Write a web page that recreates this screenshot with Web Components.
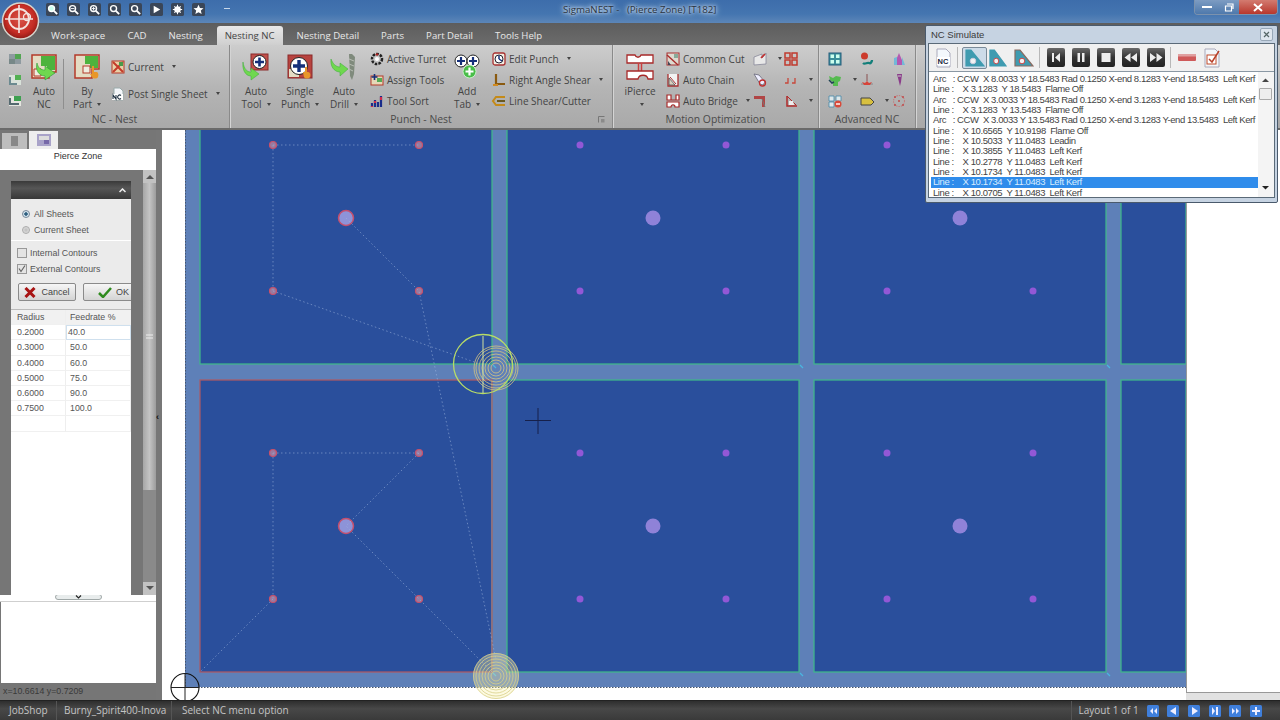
<!DOCTYPE html>
<html><head><meta charset="utf-8"><title>SigmaNEST</title>
<style>
html,body{margin:0;padding:0;width:1280px;height:720px;overflow:hidden;background:#fff}
body{font-family:"Open Sans","Liberation Sans",sans-serif;display:flex;flex-direction:column;position:relative}
</style></head><body>
<sn-titlebar title-text="SigmaNEST -   (Pierce Zone) [T182]"></sn-titlebar>
<sn-tabs>
<sn-tab style="letter-spacing:.2px">Work-space</sn-tab><sn-tab>CAD</sn-tab><sn-tab>Nesting</sn-tab><sn-tab active>Nesting NC</sn-tab><sn-tab>Nesting Detail</sn-tab><sn-tab>Parts</sn-tab><sn-tab>Part Detail</sn-tab><sn-tab>Tools Help</sn-tab>
</sn-tabs>
<sn-ribbon>
 <rb-group label="NC - Nest" style="width:229px">
  <rb-col style="margin-left:8px;width:15px"><rb-small icon="mini1"></rb-small><rb-small icon="mini2"></rb-small><rb-small icon="mini3"></rb-small></rb-col>
  <rb-big icon="autonc" style="width:38px;margin-left:2px">Auto<br>NC</rb-big>
  <rb-sep></rb-sep>
  <rb-big icon="bypart" drop style="width:38px;margin-left:4px">By<br>Part</rb-big>
  <rb-col style="margin-left:5px;padding-top:11px;gap:6px"><rb-small icon="current" drop>Current</rb-small><rb-small icon="post" drop>Post Single Sheet</rb-small></rb-col>
 </rb-group>
 <rb-group label="Punch - Nest" launcher style="width:382px">
  <rb-big icon="autotool" drop style="width:44px;margin-left:4px">Auto<br>Tool</rb-big>
  <rb-big icon="singlepunch" drop style="width:44px">Single<br>Punch</rb-big>
  <rb-big icon="autodrill" drop style="width:44px">Auto<br>Drill</rb-big>
  <rb-col style="margin-left:4px;width:79px"><rb-small icon="turret">Active Turret</rb-small><rb-small icon="assign">Assign Tools</rb-small><rb-small icon="sort">Tool Sort</rb-small></rb-col>
  <rb-big icon="addtab" drop style="width:36px">Add<br>Tab</rb-big>
  <rb-col style="margin-left:7px"><rb-small icon="edit" drop>Edit Punch</rb-small><rb-small icon="shear" drop>Right Angle Shear</rb-small><rb-small icon="cutter">Line Shear/Cutter</rb-small></rb-col>
 </rb-group>
 <rb-group label="Motion Optimization" style="width:205px">
  <rb-big icon="ipierce" drop style="width:44px;margin-left:5px">iPierce<br></rb-big>
  <rb-col style="margin-left:4px;width:83px"><rb-small icon="common">Common Cut</rb-small><rb-small icon="chain">Auto Chain</rb-small><rb-small icon="bridge" drop>Auto Bridge</rb-small></rb-col>
  <rb-grid style="margin-left:4px;grid-template-columns:31px 31px">
   <rb-small icon="m1" drop></rb-small><rb-small icon="m2"></rb-small>
   <rb-small icon="m3"></rb-small><rb-small icon="m4" drop></rb-small>
   <rb-small icon="m5"></rb-small><rb-small icon="m6" drop></rb-small>
  </rb-grid>
 </rb-group>
 <rb-group label="Advanced NC" style="width:96px">
  <rb-grid style="margin-left:9px;grid-template-columns:32px 32px 24px">
   <rb-small icon="a1"></rb-small><rb-small icon="a2"></rb-small><rb-small icon="a3"></rb-small>
   <rb-small icon="a4" drop></rb-small><rb-small icon="a5"></rb-small><rb-small icon="a6"></rb-small>
   <rb-small icon="a7"></rb-small><rb-small icon="a8" drop></rb-small><rb-small icon="a9"></rb-small>
  </rb-grid>
 </rb-group>
</sn-ribbon>
<sn-main>
 <sn-panel></sn-panel>
 <sn-canvas></sn-canvas>
 <sn-side></sn-side>
</sn-main>
<sn-status></sn-status>
<nc-window></nc-window>
<script>
const ICONS={
 mini1:[14,'<rect x="1" y="2" width="12" height="10" fill="#8e9aa0"/><rect x="7" y="2" width="6" height="5" fill="#52a552"/><path d="M1 7h6v5H1z" fill="#788"/>'],
 mini2:[14,'<rect x="1" y="2" width="12" height="10" fill="#d9e2da"/><rect x="7" y="2" width="6" height="5" fill="#52b052"/><path d="M2 4v7h7" fill="none" stroke="#6b8a90" stroke-width="2"/>'],
 mini3:[14,'<rect x="1" y="2" width="12" height="10" fill="#e6e6e0"/><rect x="6" y="2" width="7" height="5" fill="#3ea050"/><path d="M2 4v6h9" fill="none" stroke="#556a70" stroke-width="2"/>'],
 autonc:[26,'<path d="M1 1h24v17h-7v6H1z" fill="#e4dcc4" stroke="#b43a2a" stroke-width="1.5"/><path d="M10 2h14v14H16v-4h-6z" fill="#4db33d"/><path d="M3 15h7v7H3z" fill="#f0ece0" stroke="#b43a2a"/><path d="M6 9C7 14 10 16 14 16V12L24 19 14 26V22C8 22 4 16 6 9z" fill="#6fd84f" stroke="#2e9a3a" stroke-width=".6"/>'],
 bypart:[26,'<path d="M1 1h24v14h-7v9H1z" fill="#e4dcc4" stroke="#b43a2a" stroke-width="1.5"/><path d="M11 2h13v12h-8v-4h-5z" fill="#4db33d"/><rect x="9" y="12" width="7" height="7" fill="#f0ece0" stroke="#b43a2a"/><path d="M20 12v6h2c2 0 3 2 2 5-1 2-5 2-6 0l-2-3 2 0 0-8z" fill="#e8972a"/>'],
 current:[14,'<rect x="1" y="1" width="12" height="12" fill="#e9d0a8" stroke="#b43a2a"/><path d="M2 2l10 10M12 2L2 12" stroke="#c43a2a" stroke-width="2"/><rect x="8" y="2" width="4" height="4" fill="#4a9a4a"/>'],
 post:[14,'<path d="M3 1h6l3 3v9H3z" fill="#f4f6fa" stroke="#9aa"/><rect x="1" y="7" width="11" height="6" fill="#fff"/><path d="M2 12V8l3 4V8M10 8.5a2 2 0 1 0 0 3" fill="none" stroke="#234" stroke-width="1.1"/>'],
 autotool:[26,'<rect x="8" y="0" width="17" height="16" fill="#c2504a" stroke="#8a2a2a" stroke-width="1"/><circle cx="16.5" cy="8" r="6.5" fill="#fff" stroke="#222"/><path d="M16.5 3.5v9M12 8h9" stroke="#15307a" stroke-width="2.6"/><path d="M0 8C1 15 4 18 8 18V14L16 20 8 26V22C2 22-1 15 0 8z" fill="#6fd84f" stroke="#3aa83a" stroke-width=".5"/>'],
 singlepunch:[26,'<rect x="1" y="1" width="24" height="23" fill="#b8433f" stroke="#8a2a2a"/><path d="M2 15h10v8H2z" fill="#e4dcc4"/><circle cx="12" cy="12" r="8.5" fill="#fff" stroke="#222"/><path d="M12 6v12M6 12h12" stroke="#15307a" stroke-width="3.4"/><path d="M20 13v5c3 0 4 2 3 5-1 2-5 2-6 0l-1-5h2v-5z" fill="#e8972a"/>'],
 autodrill:[26,'<path d="M18 0l3 0 3 3-1 17-2 6-2-4z" fill="#7f8a7c"/><path d="M18 5l5 2M18 10l5 2M18 15l4 2" stroke="#b8bdb4"/><path d="M0 5C2 10 5 13 9 13V9L17 15 9 22V18C3 18-1 12 0 5z" fill="#6fd84f" stroke="#3aa83a" stroke-width=".5"/>'],
 turret:[14,'<circle cx="7" cy="7" r="5" fill="none" stroke="#222" stroke-width="2.5" stroke-dasharray="2.5 1.2"/><circle cx="7" cy="7" r="2" fill="#fff"/><path d="M7 1v3M5.5 2.5h3" stroke="#a22" stroke-width="1.1"/>'],
 assign:[14,'<rect x="1" y="3" width="12" height="9" fill="#e6d8b8" stroke="#b43a2a"/><rect x="7" y="5" width="5" height="4" fill="#5a5"/><path d="M4.5 1v6M1.5 4h6" stroke="#15307a" stroke-width="1.6"/>'],
 sort:[14,'<path d="M2 13V9M5 13V6M8 13V8M11 13V2" stroke="#1a2c8a" stroke-width="2.2"/><path d="M5 9V7M11 6V3M2 13v-1" stroke="#d02a4a" stroke-width="2.2"/>'],
 addtab:[26,'<circle cx="7" cy="7" r="6" fill="#fff" stroke="#222"/><path d="M7 3v8M3 7h8" stroke="#15307a" stroke-width="2.2"/><circle cx="19" cy="7" r="6" fill="#fff" stroke="#222"/><path d="M19 3v8M15 7h8" stroke="#15307a" stroke-width="2.2"/><circle cx="15.5" cy="17.5" r="6.5" fill="#48bd48" stroke="#c8eec8"/><path d="M15.5 13.5v8M11.5 17.5h8" stroke="#fff" stroke-width="2.2"/>'],
 edit:[14,'<rect x="1" y="1" width="12" height="12" rx="2" fill="#f1ece0" stroke="#a83030" stroke-width="1.3"/><circle cx="7" cy="7" r="4" fill="#fff" stroke="#223"/><path d="M7 7V3.5M7 7l3 2" stroke="#15307a" stroke-width="1.5"/>'],
 shear:[14,'<path d="M4 1v10h9" fill="none" stroke="#8a5a10" stroke-width="2.2"/><path d="M1 11h5v2H1z" fill="#d08a20"/>'],
 cutter:[14,'<path d="M13 3H4L1 7l3 4h9" fill="none" stroke="#c48a18" stroke-width="2"/><path d="M5 7h8" stroke="#6a5a20" stroke-width="2"/>'],
 ipierce:[26,'<path d="M0 1h8c1 3 5 3 6 0h12v8H0z" fill="#fff" stroke="#a82a2a" stroke-width="1.3"/><path d="M11.5 9v8M14.5 9v8" stroke="#c94040" stroke-width="1.5"/><path d="M0 17h26v8h-5c-1-5-9-5-10 0H0z" fill="#fff" stroke="#a82a2a" stroke-width="1.3"/>'],
 common:[14,'<rect x="1" y="1" width="12" height="12" fill="#dedad0" stroke="#a83030"/><path d="M1 3l11 10" stroke="#a82a2a" stroke-width="1.4"/><path d="M2 9l3 4h-3z" fill="#445"/><rect x="8" y="2" width="4" height="4" fill="#8a9"/>'],
 chain:[14,'<path d="M2 1v12h10V1" fill="#f2f2f2" stroke="#a83030" stroke-width="1.3"/><path d="M4 4l6 7" stroke="#a83030"/><path d="M3 5l6 7H3z" fill="#d8d0c0" stroke="#444" stroke-width=".7"/>'],
 bridge:[14,'<path d="M1 1h4v5h5V1h3v5H1zM1 8h12v5H9c0-3-4-3-4 0H1z" fill="#fff" stroke="#a82a2a" stroke-width="1.2"/>'],
 m1:[14,'<path d="M1 13V5l8-3 0 4 4-5v11z" fill="#e8e8e8" stroke="#889" stroke-width=".8"/><path d="M8 6l4-4" stroke="#c03030" stroke-width="1.7"/>'],
 m2:[14,'<rect x="1" y="1" width="5" height="5" fill="none" stroke="#c03a2e" stroke-width="1.5"/><rect x="8" y="1" width="5" height="5" fill="none" stroke="#c03a2e" stroke-width="1.5"/><rect x="1" y="8" width="5" height="5" fill="none" stroke="#c03a2e" stroke-width="1.5"/><rect x="8" y="8" width="5" height="5" fill="none" stroke="#c03a2e" stroke-width="1.5"/>'],
 m3:[14,'<path d="M1 1l5 1 6 7-2 3-3-1z" fill="#eef" stroke="#667" stroke-width=".8"/><circle cx="9.5" cy="10" r="3" fill="none" stroke="#c03030" stroke-width="1.3"/>'],
 m4:[14,'<path d="M2 9h3V4M12 4v5H9" fill="none" stroke="#c8473a" stroke-width="1.3" transform="translate(-1 1)"/>'],
 m5:[14,'<path d="M1 2h11v11h-3V5H1z" fill="#b04545"/><path d="M9 5l3 8" stroke="#777"/>'],
 m6:[14,'<path d="M3 2v10h10" fill="none" stroke="#b02a2a" stroke-width="1.5"/><path d="M3 2l9 9" stroke="#b02a2a"/><path d="M5 7l4 0 1 4H5z" fill="#eee"/>'],
 a1:[14,'<rect x="1" y="1" width="12" height="12" fill="#3a8f9a" stroke="#245c7c"/><rect x="2.5" y="2.5" width="3.5" height="3.5" fill="#cfe"/><rect x="8" y="2.5" width="3.5" height="3.5" fill="#cfe"/><rect x="2.5" y="8" width="3.5" height="3.5" fill="#cfe"/><rect x="8" y="8" width="3.5" height="3.5" fill="#cfe"/>'],
 a2:[14,'<circle cx="4.5" cy="4" r="3.5" fill="#cc3b2c"/><path d="M3 11c2 2 4-1 6 0s3-2 3-3" fill="none" stroke="#137f7a" stroke-width="2.3"/>'],
 a3:[14,'<path d="M7 1l5 12H2z" fill="#b358b0"/><path d="M2 13V6l3-1v8z" fill="#72b8d8"/><path d="M10 13V5l3 8z" fill="#72b8d8"/>'],
 a4:[14,'<path d="M1 3l4 2 3-2 5 1-1 4-2 1v4H5V9L2 7z" fill="#56bb50"/><path d="M1 7l3 3 2-1" stroke="#245" fill="none" stroke-width="1.5"/>'],
 a5:[14,'<path d="M7 1v7" stroke="#8a5050"/><path d="M1 11h12" stroke="#888"/><path d="M7 8l2 2 3-1-2 3H4L2 9l3 1z" fill="#d6443a"/>'],
 a6:[14,'<path d="M5 1h5l-1 8-1 4-1-4z" fill="#8a3c8a"/><path d="M6 3h3" stroke="#ccc"/>'],
 a7:[14,'<path d="M1 2h5v5H1zM8 2h5v5H8zM1 8h5v5H1z" fill="#dfe8ea" stroke="#48a" stroke-width=".8"/><circle cx="10" cy="10" r="3.5" fill="#d84a3a"/><path d="M8 10h4" stroke="#fff" stroke-width="1.4"/>'],
 a8:[14,'<path d="M1 4h9l4 4-3 3H1z" fill="#d8c040" stroke="#444"/>'],
 a9:[14,'<g fill="none" stroke="#c08080" stroke-width="1.1" stroke-dasharray="1.5 1"><circle cx="7" cy="7" r="5.5"/></g><g fill="#c04a4a"><circle cx="3" cy="3" r="1"/><circle cx="11" cy="3" r="1"/><circle cx="3" cy="11" r="1"/><circle cx="11" cy="11" r="1"/><circle cx="7" cy="7" r="1"/></g>']
};
function icon(n,s){const d=ICONS[n];if(!d)return'';return `<svg width="${s}" height="${s}" viewBox="0 0 ${d[0]} ${d[0]}" style="display:block;overflow:visible;flex:none">${d[1]}</svg>`}
function def(name,fn){
  customElements.define(name,class extends HTMLElement{
    constructor(){super();this.attachShadow({mode:'open'});}
    connectedCallback(){this.shadowRoot.innerHTML=fn(this);}
  });
}
const DROP='<i style="display:inline-block;width:0;height:0;border:2.5px solid transparent;border-top:3px solid #444;border-bottom:0;vertical-align:2px;margin-left:5px"></i>';
const RBFONT='font:10px "Open Sans","Liberation Sans",sans-serif;color:#444';

def('sn-titlebar',el=>`<style>:host{display:flex;height:23px;position:relative;background:linear-gradient(#3d6dab,#4475b0 60%,#5c86b8);align-items:flex-start;box-sizing:border-box;flex:none}
.qat{display:flex;gap:7.8px;margin:3px 0 0 46px}.q{width:13px;height:13px}
.dd{margin:8px 0 0 19px;width:6px;height:5px;border-top:1px solid #c8d8ea}
.title{position:absolute;left:563px;top:2px;font:9.7px/16px "Open Sans","Liberation Sans",sans-serif;color:#2a3340;white-space:pre;text-shadow:0 0 5px #cfe0f2,0 0 7px #cfe0f2,0 0 3px #cfe0f2}
.ctl{position:absolute;right:2px;top:0;height:14px;display:flex;border:1px solid #7c92ad;border-top:0;border-radius:0 0 4px 4px;overflow:hidden}
.c{height:14px;width:24px;background:linear-gradient(#7d9cc2,#4e79ac);display:flex;align-items:center;justify-content:center}.c.r{width:20px}.x{width:38px;background:linear-gradient(#d37b70,#b8372c)}
.logo{position:absolute;left:1px;top:0;z-index:5}</style>
<svg class="logo" width="42" height="42" viewBox="0 0 42 42"><defs><radialGradient id="lg" cx=".5" cy=".45" r=".6"><stop offset="0" stop-color="#d8544a"/><stop offset=".65" stop-color="#c42c24"/><stop offset="1" stop-color="#7c1612"/></radialGradient></defs><circle cx="19.5" cy="21" r="18" fill="url(#lg)" stroke="#d8d4cc" stroke-width="1.5"/><circle cx="18" cy="19" r="10" fill="none" stroke="#f4e4e0" stroke-width="1.8"/><path d="M18 5v28M4 19h28" stroke="#f4e4e0" stroke-width="1.6"/><circle cx="26" cy="17" r="3.5" fill="none" stroke="#f4e4e0" stroke-width="1.3"/></svg>
<div class="qat">${[0,1,2,3,4,5,6,7].map(i=>{const g=i==5?'<path d="M4 3l7 4-7 4z" fill="#fff"/>':i==6?'<circle cx="7" cy="7" r="3.5" fill="#fff"/><circle cx="7" cy="7" r="1.2" fill="#3a4658"/><path d="M7 2v10M2 7h10M3.5 3.5l7 7M10.5 3.5l-7 7" stroke="#fff" stroke-width="1.1"/>':i==7?'<path d="M7 1.8l1.6 3.5 3.8.4-2.9 2.5.9 3.7L7 10l-3.4 1.9.9-3.7L1.6 5.7l3.8-.4z" fill="#fff"/>':`<circle cx="6" cy="6" r="3.2" fill="${i==0?'#cfe':'none'}" stroke="#fff" stroke-width="1.5"/><path d="M8.5 8.5l3.5 3.5" stroke="#fff" stroke-width="2"/>${i==2?'<path d="M6 4v4M4 6h4" stroke="#fff"/>':i==1?'<path d="M4 6h4" stroke="#fff"/>':''}`;return `<svg class="q" viewBox="0 0 14 14"><rect width="14" height="14" rx="2" fill="#3a4658"/>${g}</svg>`}).join('')}</div>
<div class="dd"></div>
<div class="title">${el.getAttribute('title-text')}</div>
<div class="ctl"><div class="c"><svg width="10" height="4"><rect y="1" width="10" height="2" fill="#fff"/></svg></div><div class="c r"><svg width="10" height="9"><path d="M1.5 3h6v5h-6zM3 1h6v5" fill="none" stroke="#fff" stroke-width="1.2"/></svg></div><div class="c x"><svg width="10" height="9"><path d="M1 1l8 7M9 1L1 8" stroke="#fff" stroke-width="2"/></svg></div></div>`);

def('sn-tabs',()=>`<style>:host{display:flex;height:22px;flex:none;background:linear-gradient(#5d5d5d,#6c6c6c);padding-left:40px;box-sizing:border-box;align-items:flex-end}</style><slot></slot>`);
def('sn-tab',el=>{const a=el.hasAttribute('active');return `<style>:host{display:block;height:19px;padding:0 ${a?8:11}px;${a?'margin:0 3px;':''}font:9.6px/20px "Open Sans","Liberation Sans",sans-serif;color:${a?'#444':'#e8e8e8'};${a?'background:linear-gradient(#e8e8e8,#cfcfcf);border-radius:3px 3px 0 0;':''}white-space:nowrap}</style><slot></slot>`});

def('sn-ribbon',()=>`<style>:host{display:flex;height:85px;flex:none;background:linear-gradient(#cdcdcd,#b5b5b5 50%,#a9a9a9);box-sizing:border-box;border-bottom:2px solid #6a6a6a;width:1280px}</style><slot></slot>`);
def('rb-group',el=>`<style>:host{display:flex;flex-direction:column;border-right:1px solid #8a8a8a;box-shadow:1px 0 0 #d4d4d4;position:relative;flex:none}
.c{display:flex;height:67px;align-items:flex-start}.l{height:16px;line-height:16px;text-align:center;${RBFONT};font-size:10.4px;color:#4a4a4a}
.lz{position:absolute;right:7px;bottom:5px;width:7px;height:7px}</style>
<div class="c"><slot></slot></div><div class="l">${el.getAttribute('label')}</div>${el.hasAttribute('launcher')?'<svg class="lz" viewBox="0 0 7 7"><path d="M.5 6.5v-6h6" fill="none" stroke="#777"/><rect x="3" y="3" width="3.5" height="3.5" fill="#8a8a8a"/></svg>':''}`);
def('rb-col',()=>`<style>:host{display:flex;flex-direction:column;padding-top:3px;flex:none}</style><slot></slot>`);
def('rb-grid',()=>`<style>:host{display:grid;padding-top:3px;flex:none}</style><slot></slot>`);
def('rb-sep',()=>`<style>:host{display:block;width:1px;height:50px;margin-top:14px;background:#8e8e8e;flex:none}</style>`);
def('rb-big',el=>`<style>:host{display:flex;flex-direction:column;align-items:center;padding-top:9px;text-align:center;${RBFONT};line-height:13px;flex:none}.i{height:31px}</style><div class="i">${icon(el.getAttribute('icon'),26)}</div><div><slot></slot>${el.hasAttribute('drop')?DROP:''}</div>`);
def('rb-small',el=>`<style>:host{display:flex;align-items:center;height:21px;white-space:nowrap;${RBFONT};gap:3px}</style>${icon(el.getAttribute('icon'),14)}<span><slot></slot></span>${el.hasAttribute('drop')?DROP:''}`);

def('sn-main',()=>`<style>:host{display:flex;height:570px;flex:none;overflow:hidden}</style><slot></slot>`);

def('sn-panel',()=>`<style>:host{display:flex;flex-direction:column;width:162px;flex:none;background:#767676;font:8.8px "Liberation Sans",sans-serif;color:#444;position:relative;box-sizing:border-box;padding-right:6px}
.t{height:19px;display:flex;gap:2px;padding:0 0 0 2px;box-sizing:border-box;align-items:flex-end;flex:none}.tb{width:25px;height:16px;background:#bdbdbd;display:flex;justify-content:center;align-items:center}.tb.a{background:#eee;height:18px;width:29px}
.h{height:21px;flex:none;background:#fff;text-align:center;line-height:14px;color:#333;font-size:9px}
.b{height:425px;flex:none;display:flex;padding-left:11px;box-sizing:border-box}
.in{width:120px;height:100%;padding-top:11px;box-sizing:border-box;display:flex;flex-direction:column}
.dh{height:18px;flex:none;background:linear-gradient(#3a3a3a,#565656 40%,#383838);display:flex;align-items:center;justify-content:flex-end;padding-right:5px;box-sizing:border-box}
.w{background:#ebebeb;flex:none;padding-top:7px}
.r{display:flex;align-items:center;height:16px;gap:4px;padding-left:11px;color:#555}
.rd{width:8px;height:8px;border-radius:50%;background:radial-gradient(#bcbcbc,#e8e8e8);border:1px solid #aaa;box-sizing:border-box}.rd.on{background:radial-gradient(#2f5f7f 35%,#d4e4ee 45%);border-color:#789}
.hr{height:1px;background:#fff;margin:2px 0 4px}
.c{display:flex;align-items:center;height:16px;padding-left:6px;gap:3px;color:#555}
.cb{width:10px;height:10px;box-sizing:border-box;border:1px solid #999;background:#e4e4e4;display:block;position:relative}
.btns{display:flex;gap:7px;padding:6px 0 8px 7px;overflow:hidden}
.bt{height:18px;width:58px;flex:none;border:1px solid #8a8a8a;border-radius:2px;box-sizing:border-box;background:linear-gradient(#f6f6f6,#d4d4d4);display:flex;align-items:center;justify-content:center;gap:5px;color:#444;font-size:9px}
.tbl{flex:1;background:#fff;display:grid;grid-template-columns:55px 1fr;grid-auto-rows:15.2px;align-content:start;position:relative;border-top:1px solid #bbb}
.tbl>div{padding-left:6px;line-height:15px;white-space:nowrap;box-sizing:border-box;border-bottom:1px solid #f0f0f0;border-right:1px solid #eee;color:#555}
.tbl>div:nth-child(even){padding-left:4px}
.tbl>div.hd{background:#f1f1f1}
.tbl>div.ed{outline:1px solid #cfe0ee;outline-offset:-1px;padding-left:2px}
.sb{width:13px;margin-left:12px;display:flex;flex-direction:column;background:#9b9b9b;flex:none;box-sizing:border-box}
.ar{height:13px;background:#c2c2c2;display:flex;justify-content:center;align-items:center;flex:none}
.th{height:307px;flex:none;background:linear-gradient(90deg,#a6a6a6,#c4c4c4 50%,#9c9c9c);display:flex;justify-content:center;align-items:center}.tr{flex:1;background:#8a8a8a}
.sp{height:7px;flex:none;background:#fff;display:flex;justify-content:center;border-bottom:1px solid #cfcfcf;box-sizing:border-box}
.gr{width:47px;height:6px;border:1px solid #a0a8a8;border-radius:3px;background:#e8ecec;margin-top:-1px;box-sizing:border-box}
.box{height:81px;flex:none;background:#fff;margin-left:1px}
.co{flex:1;padding-left:3px;line-height:17px;color:#3a3a3a;font-size:8.8px}
.gut{position:absolute;right:0;top:0;bottom:0;width:6px;background:#777}
.gut i{position:absolute;left:0;top:283px;font:bold 9px/9px "Liberation Sans",sans-serif;color:#111;font-style:normal}</style>
<div class="t"><div class="tb"><svg width="13" height="12"><rect x="3" y="1" width="7" height="10" fill="#888"/></svg></div><div class="tb a"><svg width="14" height="12"><rect width="14" height="12" fill="#a9a3c9"/><rect x="2" y="2" width="10" height="4" fill="#ddd"/><rect x="7" y="6" width="5" height="4" fill="#7668a8"/></svg></div></div>
<div class="h">Pierce Zone</div>
<div class="b"><div class="in"><div class="dh"><svg width="7" height="5"><path d="M.5 4l3-3 3 3" fill="none" stroke="#eee" stroke-width="1.5"/></svg></div>
<div class="w"><div class="r"><span class="rd on"></span><span>All Sheets</span></div><div class="r"><span class="rd"></span><span>Current Sheet</span></div><div class="hr"></div>
<div class="c"><span class="cb"></span><span>Internal Contours</span></div><div class="c"><span class="cb"><svg width="8" height="8" style="position:absolute;left:0;top:0"><path d="M1 3.5l2 3 4-6" fill="none" stroke="#666" stroke-width="1.2"/></svg></span><span>External Contours</span></div>
<div class="btns"><div class="bt"><svg width="12" height="11"><path d="M1.5 1l9 9M10.5 1l-9 9" stroke="#a81414" stroke-width="3"/></svg><span>Cancel</span></div><div class="bt" style="gap:4px;justify-content:flex-start;padding-left:14px"><svg width="14" height="11"><path d="M1 6l4 4 8-9" fill="none" stroke="#2e8a1e" stroke-width="2.5"/></svg><span>OK</span></div></div></div>
<div class="tbl"><div class="hd">Radius</div><div class="hd">Feedrate %</div><div>0.2000</div><div class="ed">40.0</div><div>0.3000</div><div>50.0</div><div>0.4000</div><div>60.0</div><div>0.5000</div><div>75.0</div><div>0.6000</div><div>90.0</div><div>0.7500</div><div>100.0</div><div></div><div></div></div>
</div><div class="sb"><div class="ar"><svg width="8" height="5"><path d="M0 5l4-4 4 4z" fill="#555"/></svg></div><div class="th"><svg width="7" height="5"><path d="M0 1h7M0 4h7" stroke="#eee"/></svg></div><div class="tr"></div><div class="ar"><svg width="8" height="5"><path d="M0 0l4 4 4-4z" fill="#555"/></svg></div></div></div>
<div class="sp"><div class="gr"><svg width="7" height="4" style="display:block;margin:0 auto"><path d="M1 .5l2.5 2.5L6 .5" fill="none" stroke="#222" stroke-width="1.2"/></svg></div></div>
<div class="box"></div><div class="co">x=10.6614 y=0.7209</div>
<div class="gut"><i>‹</i></div>`);

def('sn-canvas',()=>{
 const cols=[200,507,814,1121],rows=[72,380],W=292,H=292;let s='';
 s+=`<rect x="185" y="130" width="1001" height="557" fill="#5e80b8"/><path d="M185.5 130v557.5H1186" fill="none" stroke="#44546c" stroke-dasharray="1.5 1.5"/>`;
 for(const y of rows)for(const x of cols){const red=x==200&&y==380;
  s+=`<rect x="${x}" y="${y}" width="${Math.min(W,1186-x)}" height="${H}" fill="#2a4f9c" stroke="${red?'#a85a68':'#3fb48c'}" stroke-width="1.3"/>`;
  if(red)s+=`<path d="M${x+W} ${y}v${H}" stroke="#8a7080" stroke-width="2"/>`;
  if(x+W<1186)s+=`<path d="M${x+W+1} ${y+H+1}l3 3" stroke="#49b6e0" stroke-width="1.3"/>`;
  const first=x==200;
  for(const dy of [73,146,219])for(const dx of [73,146,219]){const big=dx==146&&dy==146;
   if(!big&&(dx==146||dy==146))continue;
   const cx=x+dx,cy=y+dy;
   if(cx>1186)continue;
   if(big)s+=`<circle cx="${cx}" cy="${cy}" r="7.5" fill="${first?'#8d93d8':'#8f82d8'}" ${first?'stroke="#c4506e" stroke-width="1.5"':''}/>`;
   else s+=`<circle cx="${cx}" cy="${cy}" r="3.5" fill="${first?'#9a7aa0':'#9258d6'}" ${first?'stroke="#c8506a" stroke-width="1.2"':''}/>`;
  }}
 const dots='fill="none" stroke="#9cb4dc" stroke-width="1" stroke-dasharray="1.5 2.5" opacity=".55"';
 s+=`<path d="M273 145H419M273 145V291M346 218L419 291L496 660M273 291L480 364M273 453H419M273 453V599M419 453L346 526L492 672M273 599L200 672" ${dots}/>`;
 s+=`<circle cx="496" cy="676" r="23" fill="#f8f0a8" opacity=".35"/>`;
 const conc=(cx,cy,rs,c)=>rs.map(r=>`<circle cx="${cx}" cy="${cy}" r="${r}" fill="none" stroke="${c}" stroke-width="1" opacity=".8"/>`).join('');
 s+=conc(496,676,[5,8,11,14,17,20,22.5],'#d8cf88');
 s+=conc(496,368,[5,8,11,14,17,20,22],'#d4c482');
 s+=`<circle cx="483" cy="364" r="29.5" fill="none" stroke="#b8dc66" stroke-width="1.3"/><path d="M483 336V393" stroke="#cfe0a0" stroke-width="1"/>`;
 s+=`<path d="M538 408V434M525 420.5H551" stroke="#16204a" stroke-width="1"/>`;
 s+=`<circle cx="185" cy="687.5" r="14" fill="none" stroke="#111" stroke-width="1.1"/><path d="M171 687.5H199M185 673V700" stroke="#222" stroke-width="1"/>`;
 return `<style>:host{display:block;width:1024px;height:570px;flex:none;background:#fff}svg{display:block}</style><svg width="1024" height="570" viewBox="162 130 1024 570">${s}</svg>`});
def('sn-side',()=>`<style>:host{display:flex;flex-direction:column;width:94px;flex:none;background:#e2e2e2}.w{height:563px;background:#fff;border-left:1px solid #999;border-bottom:1px solid #999;box-sizing:border-box}</style><div class="w"></div>`);

def('sn-status',()=>`<style>:host{display:flex;height:20px;flex:none;background:linear-gradient(#2e2e2e,#484848 40%,#3a3a3a);border-top:1px solid #222;box-sizing:border-box;font:10px/19px "Open Sans","Liberation Sans",sans-serif;color:#c4c4c4;white-space:nowrap;align-items:stretch}
.i{border-right:1px solid #555;box-sizing:border-box}.sp{flex:1}.ly{border-left:1px solid #555;padding-left:7px;width:68px}
.n{display:flex;gap:8.7px;align-items:center;margin-right:18px}</style>
<div class="i" style="width:57px;padding-left:9px">JobShop</div><div class="i" style="width:115px;padding-left:7px">Burny_Spirit400-Inova</div><div style="padding-left:10px">Select NC menu option</div><div class="sp"></div><div class="ly">Layout 1 of 1</div>
<div class="n">${['M3 6l3-3v6zM7 6l3-3v6z','M3 6l6-4v8z','M4 2l6 4-6 4z','M3 2l3 4-3 4zM7 2h2v8H7z','M3 3l3 3-3 3zM7 3l3 3-3 3z','M5 2h2v3h3v2H7v3H5V7H2V5h3z'].map(d=>`<svg width="12" height="12" viewBox="0 0 12 12"><rect width="12" height="12" rx="1.5" fill="#3f7fdc"/><path d="${d}" fill="#eef"/></svg>`).join('')}</div>`);

const ROWS=[
"Arc   : CCW  X 8.0033 Y 18.5483 Rad 0.1250 X-end 8.1283 Y-end 18.5483  Left Kerf",
"Line :    X 3.1283  Y 18.5483  Flame Off",
"Arc   : CCW  X 3.0033 Y 18.5483 Rad 0.1250 X-end 3.1283 Y-end 18.5483  Left Kerf",
"Line :    X 3.1283  Y 13.5483  Flame Off",
"Arc   : CCW  X 3.0033 Y 13.5483 Rad 0.1250 X-end 3.1283 Y-end 13.5483  Left Kerf",
"Line :    X 10.6565  Y 10.9198  Flame Off",
"Line :    X 10.5033  Y 11.0483  Leadin",
"Line :    X 10.3855  Y 11.0483  Left Kerf",
"Line :    X 10.2778  Y 11.0483  Left Kerf",
"Line :    X 10.1734  Y 11.0483  Left Kerf",
"Line :    X 10.1734  Y 11.0483  Left Kerf",
"Line :    X 10.0705  Y 11.0483  Left Kerf"];
def('nc-window',()=>{
 const tri=(c,w)=>`<svg width="${w}" height="18" viewBox="0 0 20 18" preserveAspectRatio="none" style="display:block;flex:none"><path d="M1 17V1h5l13 16z" fill="#3f9bb0" stroke="${c}" stroke-width="1.2"/><circle cx="8" cy="12" r="2.8" fill="#f2f2f2" stroke="${c=='#8a6a60'?'#c44':(w==18?'#c44':'#ccd')}"/></svg>`;
 const dk=p=>`<svg width="18" height="19" viewBox="0 0 18 19" style="flex:none"><rect width="18" height="19" rx="2" fill="url(#dk)"/><path d="${p}" fill="#eee"/></svg>`;
 return `<style>:host{position:absolute;left:925px;top:25px;width:353px;height:178px;background:#c6d3e2;border:1px solid #4a5a6c;box-sizing:border-box;border-radius:2px;display:flex;flex-direction:column;font:9.5px "Liberation Sans",sans-serif;color:#333;z-index:10}
.t{height:17px;display:flex;align-items:center;padding:0 4px 0 5px;justify-content:space-between;font-size:9.5px;color:#3a3a3a;flex:none}
.x{width:11px;height:11px;border:1px solid #98a8b8;border-radius:2px;background:#dfe6ee;display:flex;align-items:center;justify-content:center}
.in{margin:0 2px 4px 2px;flex:1;border:1px solid #5a6a78;display:flex;flex-direction:column;min-height:0}
.tb{height:27px;background:#f0f0f0;display:flex;align-items:center;flex:none;padding-left:7px}
.s{width:1px;height:21px;background:#b8b8b8;flex:none}
.on{border:1px solid #7a8a98;border-radius:2px;background:#cddbe8;width:25px;height:22px;display:flex;align-items:center;justify-content:flex-end;padding-right:1px;box-sizing:border-box;margin:0 2px 0 0;flex:none}
.l{flex:1;background:#fff;display:flex;min-height:0;border-top:1px solid #8a98a4;position:relative;overflow:hidden}
.rows{flex:1;padding:2px 0 0 2px;overflow:hidden;min-width:0}
.ro{height:10.35px;line-height:10.35px;white-space:pre;padding-left:2px;color:#444;letter-spacing:-.42px}.ro.sel{background:#2f8ceb;color:#d8ecff}
.sb{width:16px;flex:none;background:#f4f4f4;position:relative}
.sb svg{left:4px}
.th{position:absolute;top:16px;left:1px;width:13px;height:12px;background:#eee;border:1px solid #aaa;box-sizing:border-box;border-radius:1px}</style>
<div class="t"><span>NC Simulate</span><span class="x"><svg width="7" height="7"><path d="M1 1l5 5M6 1L1 6" stroke="#566" stroke-width="1.2"/></svg></span></div>
<div class="in"><div class="tb"><svg width="0" height="0" style="position:absolute"><defs><linearGradient id="dk" x1="0" y1="0" x2="0" y2="1"><stop offset="0" stop-color="#6a6a6a"/><stop offset=".5" stop-color="#333"/><stop offset="1" stop-color="#222"/></linearGradient></defs></svg>
<svg width="15" height="20" viewBox="0 0 15 20" style="flex:none"><path d="M1 1h9l4 4v14H1z" fill="#f4f8fc" stroke="#aab"/><rect x="1" y="9" width="13" height="8" fill="#fff"/><text x="1.5" y="16" font-family="Liberation Sans" font-weight="bold" font-size="7.5" fill="#1a2a40">NC</text></svg>
<span class="s" style="margin-left:6px;margin-right:4px"></span><span class="on">${tri('#3f9bb0',20)}</span>${tri('#3f9bb0',18)}<span style="margin:0 5px 0 7px;display:block;flex:none">${tri('#8a6a60',20)}</span><span class="s" style="margin-right:7px"></span>
<span style="display:flex;gap:7px;flex:none">${dk('M5 5h2v9H5zM8 9.5l5-4.5v9z')}${dk('M5.5 5h2.5v9H5.5zM10 5h2.5v9H10z')}${dk('M4.5 5h9v9h-9z')}${dk('M2.5 9.5l6-4.5v9zM9 9.5l6-4.5v9z')}${dk('M3 5l6 4.5-6 4.5zM9.5 5l6 4.5-6 4.5z')}</span><span class="s" style="margin:0 7px 0 5px"></span>
<svg width="18" height="8" style="margin-right:8px;flex:none"><rect width="18" height="7" rx="1" fill="#cf5a5a"/><rect y="0" width="18" height="2.5" fill="#e0a0a0"/></svg>
<svg width="17" height="20" viewBox="0 0 17 20" style="flex:none"><path d="M1 1h10l4 4v14H1z" fill="#f2f6fa" stroke="#aab"/><rect x="3" y="7" width="9" height="9" fill="#fff" stroke="#c04a2a"/><path d="M5 11l3 3 7-11" fill="none" stroke="#b8402a" stroke-width="1.5"/></svg></div>
<div class="l"><div class="rows">${ROWS.map((r,i)=>`<div class="ro${i==10?' sel':''}">${r}</div>`).join('')}</div>
<div class="sb"><svg width="7" height="4" style="position:absolute;top:6px"><path d="M0 4l3.5-3.5L7 4z" fill="#444"/></svg><div class="th"></div><svg width="7" height="4" style="position:absolute;bottom:7px"><path d="M0 0l3.5 3.5L7 0z" fill="#222"/></svg></div></div></div>`});
</script></body></html>
